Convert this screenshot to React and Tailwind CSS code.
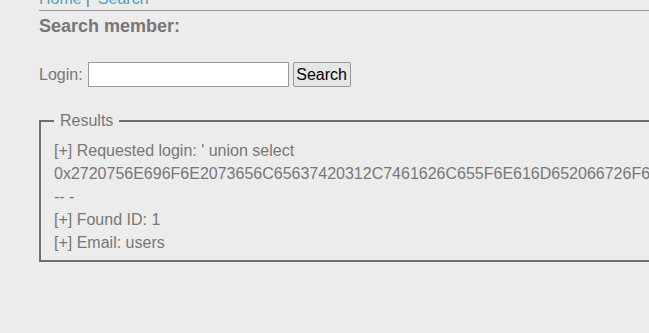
export default function App() {
  const hex =
    "0x2720756E696F6E2073656C65637420312C7461626C655F6E616D652066726F6D20696E666F726D6174696F6E5F736368656D612E7461626C6573202D2D202D";
  return (
    <div
      className="w-[649px] h-[333px] overflow-hidden bg-[#ececec] text-[#777] pl-[39px]"
      style={{ fontFamily: '"Liberation Sans", Arial, sans-serif' }}
    >
      <div className="w-[700px]">
        <div className="-mt-[10px] h-[21px] leading-[18px] text-[16px] border-b border-[#999] text-[#4a9fc9]">
          <a href="#">Home</a>
          <span className="text-[#777] mx-[4px]">|</span>
          <a href="#" className="ml-[4px]">Search</a>
        </div>
        <h2 className="mt-[5px] text-[18px] leading-[21px] font-bold text-[#777]">Search member:</h2>
        <form className="mt-[25px] flex items-center text-[16px]" onSubmit={(e) => e.preventDefault()}>
          <label className="mr-[5px]">Login:</label>
          <input
            type="text"
            className="w-[201px] h-[25px] bg-white border border-[#9a9a9a] px-[3px] text-black outline-none"
          />
          <button
            type="submit"
            className="ml-[4px] w-[58px] h-[25px] bg-[#e6e6e6] border border-[#9a9a9a] rounded-[2px] text-black text-[16px] leading-none"
          >
            Search
          </button>
        </form>
      </div>
      <fieldset className="mt-[25px] w-[900px] h-[150px] border-2 border-[#6f6f6f] pl-[13px] pt-[9px] text-[16px] leading-[23px]">
        <legend className="px-[6px] leading-[18px]">Results</legend>
        <div>[+] Requested login: ' union select</div>
        <div className="whitespace-nowrap">{hex}</div>
        <div>-- -</div>
        <div>[+] Found ID: 1</div>
        <div>[+] Email: users</div>
      </fieldset>
    </div>
  );
}
